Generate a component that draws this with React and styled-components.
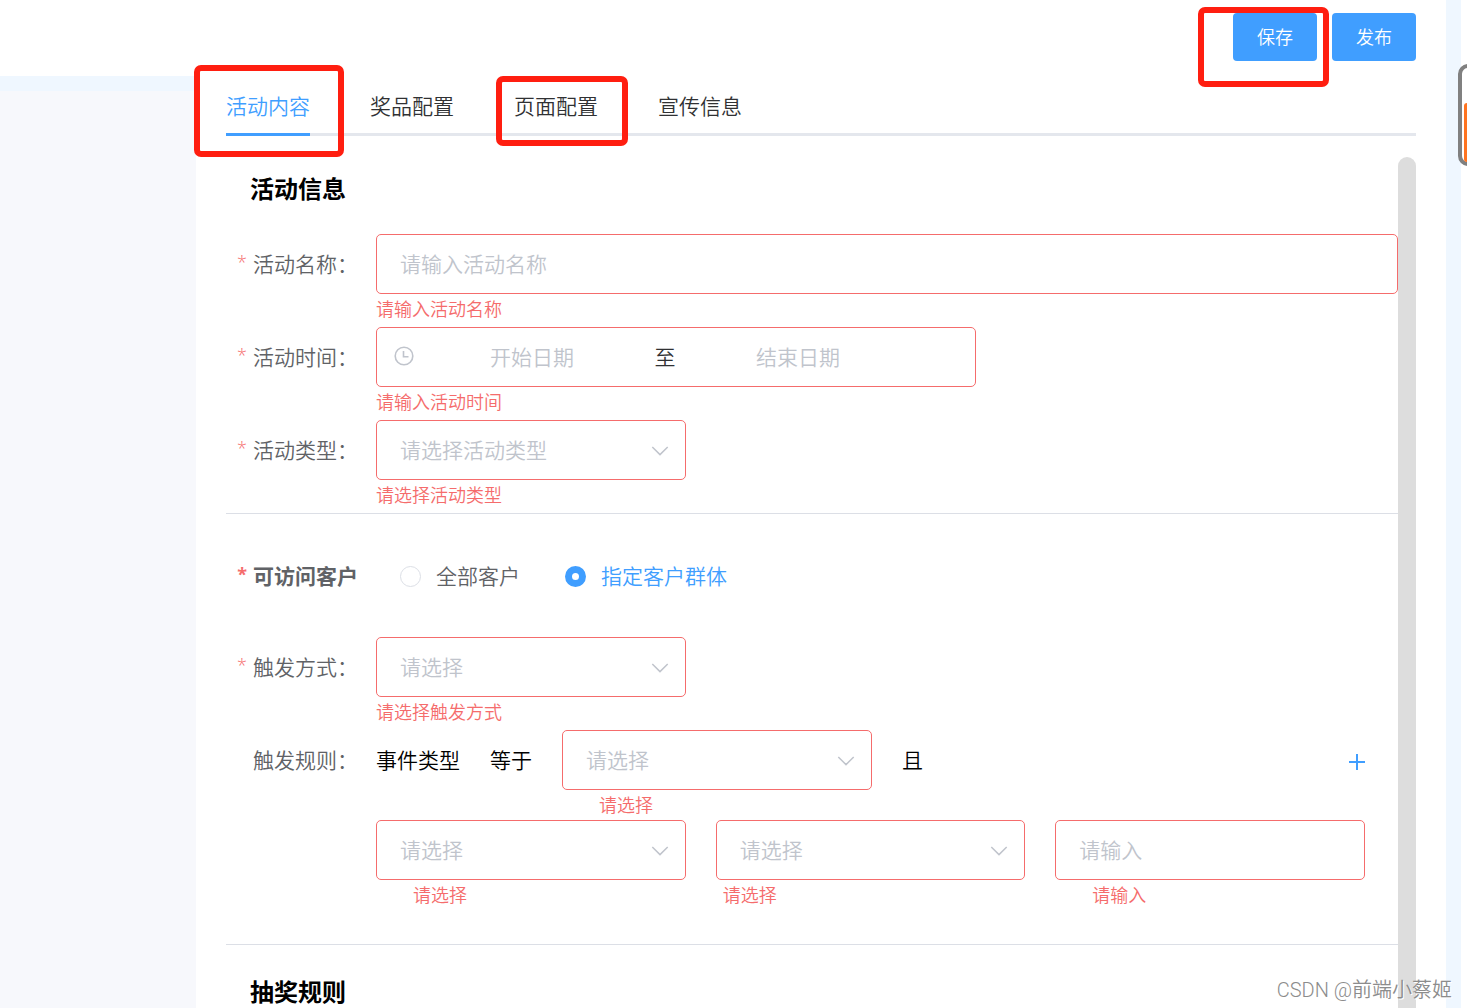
import React, { useState } from 'react'
import styled, { createGlobalStyle } from 'styled-components'

const GlobalStyle = createGlobalStyle`
    * {
        box-sizing: border-box;
    }
    body {
        margin: 0;
        overflow: hidden;
        color: #303133;
        background: #ffffff;
        font-family: 'Noto Sans CJK SC', sans-serif;
        font-size: 21px;
        font-weight: 350;
    }
    input, select, button {
        font: inherit;
    }
`;

const Page = styled.div`
    position: relative;
    display: flex;
    height: 100vh;
    overflow: hidden;
`;

const Side = styled.aside`
    flex: 0 0 196px;
    margin-top: 76px;
    border-top: 15px solid #eff7ff;
    background: #f7f8fc;
`;

const Main = styled.main`
    flex: 1;
    min-width: 0;
    display: flex;
    flex-direction: column;
    padding: 0 30px;
`;

const Gutter = styled.div`
    flex: 0 0 15px;
    margin-right: 6px;
    background: #eff7ff;
`;

const Header = styled.header`
    height: 76px;
    padding-top: 13px;
    display: flex;
    justify-content: flex-end;
    gap: 15px;
`;

const Anchor = styled.div`
    position: relative;
`;

/* red frame drawn over a control */
const Mark = styled.span`
    position: absolute;
    z-index: 2;
    top: ${props => props.$top}px;
    left: ${props => props.$left}px;
    width: ${props => props.$width}px;
    height: ${props => props.$height}px;
    border: 6px solid #ff1e10;
    border-radius: 7px;
    pointer-events: none;
`;

const Button = styled.button`
    width: 84px;
    height: 48px;
    padding: 0 0 2px;
    border: none;
    border-radius: 4px;
    color: #ffffff;
    background: #409eff;
    font-size: 18px;
    cursor: pointer;
`;

const Tabs = styled.nav`
    flex: none;
    height: 60px;
    display: flex;
    gap: 60px;
    box-shadow: inset 0 -3px 0 #e4e7ed;
`;

const Tab = styled.button`
    height: 60px;
    padding: 2px 0 0;
    border: none;
    border-bottom: 3px solid ${props => props.$active ? "#409eff" : "transparent"};
    color: ${props => props.$active ? "#409eff" : "#303133"};
    background: none;
    line-height: 55px;
    cursor: pointer;
`;

const Body = styled.div`
    flex: 1;
    min-height: 0;
    display: flex;
    margin-top: 21px;
`;

const Form = styled.form`
    flex: 1;
    min-width: 0;
    overflow: hidden;
`;

const ScrollBar = styled.div`
    flex: 0 0 18px;
    border-radius: 9px 9px 0 0;
    background: #dddddd;
`;

const Section = styled.section`
    border-bottom: 1px solid #dcdfe6;
    padding-top: ${props => props.$top || 0}px;
    padding-bottom: ${props => props.$bottom || 0}px;
`;

const Title = styled.h2`
    margin: 0;
    padding: 15px 24px 30px;
    color: #000000;
    font-size: 24px;
    line-height: 32px;
    font-weight: 700;
`;

const Item = styled.div`
    display: flex;
`;

const Label = styled.label`
    flex: 0 0 150px;
    padding-right: 18px;
    color: #606266;
    line-height: 58px;
    text-align: right;
    font-weight: ${props => props.$bold ? 700 : 350};
`;

const Star = styled.span`
    margin-right: 6px;
    color: #f56c6c;
    font-family: 'Open Sans', sans-serif;
    font-size: 18px;
    line-height: 1;
    vertical-align: 3px;
`;

const Field = styled.div`
    flex: ${props => props.$fill ? "1" : "0 0 310px"};
    min-width: 0;
`;

const Input = styled.input`
    display: block;
    width: 100%;
    height: 60px;
    padding: 0 23px 2px;
    border: 1px solid #f56c6c;
    border-radius: 5px;
    outline: none;
    color: #606266;
    background: #ffffff;
    &::placeholder {
        color: #c0c4cc;
        opacity: 1;
    }
`;

const Error = styled.div`
    height: ${props => props.$short ? 30 : 33}px;
    padding-top: 1px;
    padding-left: ${props => props.$indent || 0}px;
    color: #f56c6c;
    font-size: 18px;
    line-height: 26px;
`;

const SelectBox = styled.div`
    position: relative;
    color: #c0c4cc;
    svg {
        position: absolute;
        top: 26px;
        right: 17px;
        pointer-events: none;
    }
`;

const Select = styled.select`
    display: block;
    appearance: none;
    width: 100%;
    height: 60px;
    padding: 0 50px 2px 23px;
    border: 1px solid #f56c6c;
    border-radius: 5px;
    outline: none;
    color: #c0c4cc;
    background: #ffffff;
`;

const DateRange = styled.div`
    display: flex;
    align-items: center;
    width: 600px;
    height: 60px;
    padding: 0 14px;
    border: 1px solid #f56c6c;
    border-radius: 5px;
`;

const ClockBox = styled.span`
    flex: 0 0 30px;
    display: flex;
    padding: 0 0 2px 3px;
`;

const DateInput = styled.input`
    flex: 0 0 222px;
    min-width: 0;
    padding: 0 0 2px;
    border: none;
    outline: none;
    background: none;
    text-align: center;
    &::placeholder {
        color: #c0c4cc;
        opacity: 1;
    }
`;

const To = styled.span`
    flex: 0 0 44px;
    padding-bottom: 2px;
    text-align: center;
`;

const Radios = styled.div`
    display: flex;
    align-items: center;
    gap: 45px;
    height: 60px;
    margin-bottom: 31px;
    padding-left: 24px;
`;

const RadioLabel = styled.label`
    display: flex;
    align-items: center;
    gap: 15px;
    color: ${props => props.$checked ? "#409eff" : "#606266"};
    line-height: 30px;
    cursor: pointer;
`;

const RadioText = styled.span`
    padding-bottom: 3px;
`;

const Radio = styled.input`
    appearance: none;
    width: 21px;
    height: 21px;
    margin: 0;
    border: 1px solid #dcdfe6;
    border-radius: 50%;
    background: #ffffff;
    &:checked {
        border: 7px solid #409eff;
    }
`;

const Rules = styled.div`
    flex: 1;
    min-width: 0;
    padding-right: 33px;
`;

const RuleRow = styled.div`
    display: flex;
    gap: 30px;
`;

const RuleText = styled.span`
    color: #000000;
    line-height: 58px;
`;

const AddButton = styled.button`
    display: flex;
    align-items: center;
    height: 64px;
    margin-left: auto;
    padding: 0;
    border: none;
    background: none;
    cursor: pointer;
`;

const Widget = styled.div`
    position: absolute;
    top: 64px;
    right: -30px;
    width: 39px;
    height: 102px;
    padding: 35px 0 0 2px;
    border: 4px solid #808080;
    border-radius: 10px;
    background: #ffffff;
`;

const WidgetFill = styled.div`
    height: 59px;
    border-radius: 3px;
    background: #ff7420;
`;

const Watermark = styled.div`
    position: absolute;
    right: 15px;
    bottom: 3px;
    color: #8c8c8c;
    font-family: Roboto, 'Noto Sans CJK SC', sans-serif;
    font-size: 20px;
    line-height: 30px;
    text-shadow: 1px 1px 0 #ffffff;
`;

const Chevron = () => (
  <svg width="18" height="10" viewBox="0 0 18 10" fill="none" stroke="currentColor" strokeWidth="1.5">
    <path d="M1.3 1 L9 8.6 L16.7 1" />
  </svg>
)

const Clock = () => (
  <svg width="20" height="20" viewBox="0 0 20 20" fill="none" stroke="#c0c4cc" strokeWidth="1.6">
    <circle cx="10" cy="10" r="8.8" />
    <path d="M9.5 5 V10.7 H14.5" />
  </svg>
)

const Dropdown = ({ id, label, placeholder }) => (
  <SelectBox>
    <Select id={id} aria-label={label} defaultValue="">
      <option value="">{placeholder}</option>
    </Select>
    <Chevron />
  </SelectBox>
)

const tabs = [
  { name: "活动内容", mark: { $top: -11, $left: -32, $width: 150, $height: 92 } },
  { name: "奖品配置" },
  { name: "页面配置", mark: { $top: 0, $left: -18, $width: 132, $height: 70 } },
  { name: "宣传信息" },
];

const customers = ["全部客户", "指定客户群体"];

const App = () => {

    const [tab, setTab] = useState("活动内容");

    const [customer, setCustomer] = useState("指定客户群体");

    return (
      <>
        <GlobalStyle />
        <Page>
          <Side />
          <Main>
            <Header>
              <Anchor>
                <Button>保存</Button>
                <Mark $top={-6} $left={-35} $width={131} $height={80} />
              </Anchor>
              <Button>发布</Button>
            </Header>
            <Tabs>
              {
                tabs.map((item) => (
                  <Anchor key={item.name}>
                    <Tab $active={item.name === tab} onClick={() => setTab(item.name)}>{item.name}</Tab>
                    {item.mark && <Mark {...item.mark} />}
                  </Anchor>
                ))
              }
            </Tabs>
            <Body>
              <Form>
                <Section>
                  <Title>活动信息</Title>
                  <Item>
                    <Label htmlFor="name"><Star>*</Star>活动名称：</Label>
                    <Field $fill>
                      <Input id="name" placeholder="请输入活动名称" />
                      <Error>请输入活动名称</Error>
                    </Field>
                  </Item>
                  <Item>
                    <Label htmlFor="start"><Star>*</Star>活动时间：</Label>
                    <Field $fill>
                      <DateRange>
                        <ClockBox><Clock /></ClockBox>
                        <DateInput id="start" placeholder="开始日期" />
                        <To>至</To>
                        <DateInput aria-label="结束日期" placeholder="结束日期" />
                      </DateRange>
                      <Error>请输入活动时间</Error>
                    </Field>
                  </Item>
                  <Item>
                    <Label htmlFor="type"><Star>*</Star>活动类型：</Label>
                    <Field>
                      <Dropdown id="type" placeholder="请选择活动类型" />
                      <Error>请选择活动类型</Error>
                    </Field>
                  </Item>
                </Section>

                <Section $top={32} $bottom={34}>
                  <Item>
                    <Label as="span" id="customer" $bold><Star>*</Star>可访问客户</Label>
                    <Radios role="radiogroup" aria-labelledby="customer">
                      {
                        customers.map((name) => (
                          <RadioLabel key={name} $checked={name === customer}>
                            <Radio type="radio" name="customer" checked={name === customer} onChange={() => setCustomer(name)} />
                            <RadioText>{name}</RadioText>
                          </RadioLabel>
                        ))
                      }
                    </Radios>
                  </Item>
                  <Item>
                    <Label htmlFor="trigger"><Star>*</Star>触发方式：</Label>
                    <Field>
                      <Dropdown id="trigger" placeholder="请选择" />
                      <Error>请选择触发方式</Error>
                    </Field>
                  </Item>
                  <Item>
                    <Label htmlFor="event">触发规则：</Label>
                    <Rules>
                      <RuleRow>
                        <RuleText>事件类型</RuleText>
                        <RuleText>等于</RuleText>
                        <Field>
                          <Dropdown id="event" placeholder="请选择" />
                          <Error $short $indent={37}>请选择</Error>
                        </Field>
                        <RuleText>且</RuleText>
                        <AddButton type="button" aria-label="添加">
                          <svg width="16" height="16" viewBox="0 0 16 16" stroke="#409eff" strokeWidth="2">
                            <path d="M8 0 V16 M0 8 H16" />
                          </svg>
                        </AddButton>
                      </RuleRow>
                      <RuleRow>
                        <Field $fill>
                          <Dropdown label="属性" placeholder="请选择" />
                          <Error $short $indent={37}>请选择</Error>
                        </Field>
                        <Field $fill>
                          <Dropdown label="条件" placeholder="请选择" />
                          <Error $short $indent={7}>请选择</Error>
                        </Field>
                        <Field $fill>
                          <Input aria-label="值" placeholder="请输入" />
                          <Error $short $indent={37}>请输入</Error>
                        </Field>
                      </RuleRow>
                    </Rules>
                  </Item>
                </Section>

                <Section $top={15}>
                  <Title>抽奖规则</Title>
                </Section>
              </Form>
              <ScrollBar />
            </Body>
          </Main>
          <Gutter />
          <Widget><WidgetFill /></Widget>
          <Watermark>CSDN @前端小蔡姬</Watermark>
        </Page>
      </>
    )
}

export default App
